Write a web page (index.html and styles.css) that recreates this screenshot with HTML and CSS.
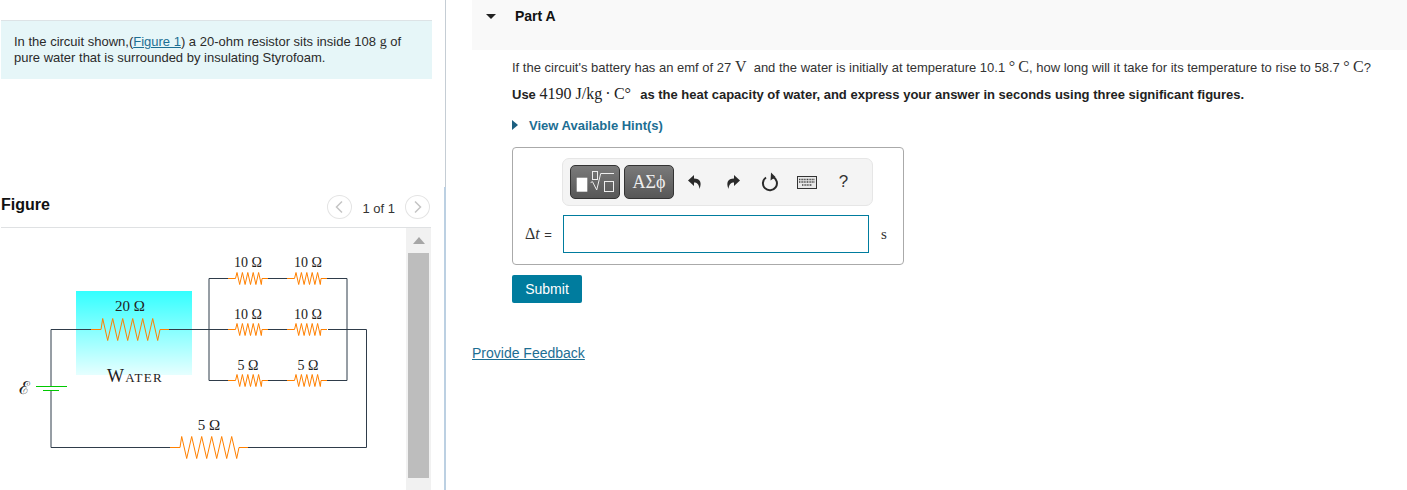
FILE: index.html
```html
<!DOCTYPE html>
<html lang="en">
<head>
  <meta charset="UTF-8" />
  <title>Part A</title>
  <link rel="stylesheet" href="styles.css">
</head>
<body>
  <div class="page">
    <!-- Left pane: problem statement and figure -->
    <div class="left-pane">
      <div class="intro">
        In the circuit shown,(<a href="#">Figure 1</a>) a 20-ohm resistor sits inside 108 <span class="math">g</span> of<br>
        pure water that is surrounded by insulating Styrofoam.
      </div>

      <div class="figure-head">
        <h2>Figure</h2>
        <div class="pager">
          <span class="pager-btn">
            <svg width="10" height="14" viewBox="0 0 10 14"><path d="M8 1.5 2.5 7 8 12.5" /></svg>
          </span>
          <span class="pager-text">1 of 1</span>
          <span class="pager-btn">
            <svg width="10" height="14" viewBox="0 0 10 14"><path d="M2 1.5 7.5 7 2 12.5" /></svg>
          </span>
        </div>
      </div>

      <div class="figure-body">
        <svg class="circuit" width="406" height="262" viewBox="0 228 406 262">
          <defs>
            <linearGradient id="water" x1="0" y1="0" x2="0" y2="1">
              <stop offset="0" stop-color="#33ffff" />
              <stop offset="1" stop-color="#e6ffff" />
            </linearGradient>
            <path id="r-big" d="M0 0H10L11.7-11 16.7 11 21.7-11 26.7 11 31.7-11 36.7 11 41.7-11 46.7 11 51.7-11 56.7 11 61.7-11 66.7 11 69 0H78" />
            <path id="r-small" d="M0 0H7.5L9-6 11.7 6 14.4-6 17.1 6 19.8-6 22.5 6 25.2-6 27.9 6 30.6-6 33.3 6 34 0H40" />
          </defs>

          <rect x="76" y="291" width="116" height="84" fill="url(#water)" />

          <g class="wire">
            <path d="M51 329.500V386M51 391V447.500H170M248 447.500H366.500V329.500H328" />
            <path d="M51 329.500H92M169 329.500H228M268 329.500H288" />
            <path d="M228 278.500H209V380.500H228M268 278.500H288M327 278.500H347V380.500H327M268 380.500H288" />
          </g>

          <g class="battery">
            <path d="M36 386.500H67M43 390.500H59" />
          </g>

          <g class="resistor">
            <use href="#r-big" x="91" y="329.500" />
            <use href="#r-big" x="170" y="447.500" />
            <use href="#r-small" x="228" y="278.500" />
            <use href="#r-small" x="287" y="278.500" />
            <use href="#r-small" x="228" y="329.500" />
            <use href="#r-small" x="287" y="329.500" />
            <use href="#r-small" x="228" y="380.500" />
            <use href="#r-small" x="287" y="380.500" />
          </g>

          <g class="labels">
            <text class="big-label" x="130" y="311">20 Ω</text>
            <text x="248" y="267">10 Ω</text>
            <text x="308" y="267">10 Ω</text>
            <text x="248" y="319">10 Ω</text>
            <text x="308" y="319">10 Ω</text>
            <text x="248" y="370">5 Ω</text>
            <text x="308" y="370">5 Ω</text>
            <text class="big-label" x="209" y="430">5 Ω</text>
            <text class="water-label" x="135" y="382">Water</text>
            <text class="emf" x="24" y="394">ℰ</text>
          </g>
        </svg>

        <div class="scrollbar">
          <span class="scroll-up"></span>
          <div class="scroll-thumb"></div>
        </div>
      </div>
    </div>

    <div class="divider">
      <div class="divider-top"></div>
      <div class="divider-grip"></div>
    </div>

    <!-- Right pane: the question -->
    <div class="right-pane">
      <div class="part-head">
        <span class="caret-down"></span>
        <h3>Part A</h3>
      </div>

      <div class="part-body">
        <p class="question">If the circuit's battery has an emf of 27 <span class="math big">V</span> &nbsp;and the water is initially at temperature 10.1 <span class="math big">°&thinsp;C</span>, how long will it take for its temperature to rise to 58.7 <span class="math big">°&thinsp;C</span>?</p>
        <p class="question strong">Use <span class="math big heat">4190 J/kg&thinsp;·&thinsp;C°</span> &nbsp;as the heat capacity of water, and express your answer in seconds using three significant figures.</p>
        <a class="hint" href="#"><span class="caret-right"></span>View Available Hint(s)</a>

        <div class="answer-box">
          <div class="toolbar">
            <button class="tool-btn templates">
              <svg width="46" height="30" viewBox="0 0 46 30">
                <rect class="fill" x="4.700" y="10.700" width="10.600" height="14" />
                <rect class="line" x="20.500" y="4.500" width="5" height="8" />
                <path class="line" d="M18.700 15.500 20.500 14.700 24.700 23 28.700 6.500H42" />
                <rect class="line" x="32.500" y="14.500" width="9" height="10" />
              </svg>
            </button>
            <button class="tool-btn symbols">ΑΣϕ</button>

            <span class="tool-icon undo">
              <svg width="16" height="18" viewBox="0 0 16 18"><path d="M7 2 1 7.500 7 13V9.500C10 9.500 12 11 12.500 16 15 10 13.500 5.500 7 5.500Z" /></svg>
            </span>
            <span class="tool-icon redo">
              <svg width="16" height="18" viewBox="0 0 16 18"><path d="M9 2 15 7.500 9 13V9.500C6 9.500 4 11 3.500 16 1 10 2.500 5.500 9 5.500Z" /></svg>
            </span>
            <span class="tool-icon reset">
              <svg width="18" height="20" viewBox="0 0 18 20">
                <path class="ring" d="M5 5.500A7 7 0 1 0 12 5" />
                <path d="M10 .5 14.500 5 9.500 8.500Z" />
              </svg>
            </span>
            <span class="tool-icon keyboard">
              <svg width="20" height="13" viewBox="0 0 20 13">
                <rect x=".5" y=".5" width="19" height="12" />
                <path class="keys" d="M2 3.500H18M2 6H18M5 9H15" />
              </svg>
            </span>
            <span class="tool-icon help">?</span>
          </div>

          <div class="answer-row">
            <label class="answer-label"><span class="math">Δ<i>t</i></span> =</label>
            <input class="answer-input" type="text" />
            <span class="answer-unit">s</span>
          </div>
        </div>

        <button class="submit">Submit</button>
      </div>

      <a class="feedback" href="#">Provide Feedback</a>
    </div>
  </div>
</body>
</html>
```

FILE: styles.css
```css
* {
  box-sizing: border-box;
}

html, body {
  margin: 0;
  padding: 0;
  height: 490px;
  overflow: hidden;
}

body {
  font-family: 'Liberation Sans', Arial, sans-serif;
  font-size: 13px;
  color: #333;
  background: #fff;
}

a {
  color: #1c6e93;
}

.page {
  display: flex;
  height: 490px;
}

.math {
  font-family: 'Liberation Serif', serif;
  font-size: 14px;
  line-height: 0;
}

/* left pane */
.left-pane {
  width: 444px;
  flex: none;
  padding: 20px 0 0 1px;
}

.intro {
  width: 431px;
  height: 59px;
  padding: 13px 13px 0;
  background: #e6f6f8;
  border-top: 1px solid #dde3e6;
  line-height: 16px;
  color: #2b2b2b;
}

.figure-head {
  display: flex;
  justify-content: space-between;
  align-items: center;
  width: 429px;
  height: 39px;
  margin-top: 109px;
  padding-bottom: 2px;
}

.figure-head h2 {
  margin: 0 0 4px;
  font-size: 16px;
  line-height: 30px;
  color: #111;
}

.pager {
  display: flex;
  align-items: center;
}

.pager-btn {
  display: flex;
  align-items: center;
  justify-content: center;
  width: 25px;
  height: 24px;
  border: 1px solid #e4e4e4;
  border-radius: 50%;
}

.pager-btn svg path {
  fill: none;
  stroke: #c4c4c4;
  stroke-width: 1.5;
}

.pager-text {
  margin: 4px 10px 0 10.500px;
  color: #333;
}

.figure-body {
  display: flex;
  width: 430px;
  height: 263px;
  border-top: 1px solid #dfe1e3;
}

.circuit {
  flex: none;
  display: block;
  margin-left: -1px;
}

.wire {
  fill: none;
  stroke: #2f3c4a;
  stroke-width: 1;
}

.battery {
  fill: none;
  stroke: #00c800;
  stroke-width: 1;
}

.resistor {
  fill: none;
  stroke: #ff8000;
  stroke-width: 1;
}

.labels text {
  font-family: 'Liberation Serif', serif;
  font-size: 14px;
  text-anchor: middle;
  fill: #222;
}

.labels .big-label {
  font-size: 15px;
}

.labels .water-label {
  font-size: 18px;
  font-variant: small-caps;
  letter-spacing: 1.300px;
}

.labels .emf {
  font-family: 'DejaVu Serif', serif;
  font-size: 18px;
}

.scrollbar {
  position: relative;
  flex: none;
  width: 25px;
  background: #f1f1f1;
  padding: 25px 2px 0;
}

.scroll-up {
  position: absolute;
  top: 9px;
  left: 7px;
  border-left: 6px solid transparent;
  border-right: 6px solid transparent;
  border-bottom: 7px solid #a6a6a6;
}

.scroll-thumb {
  height: 225px;
  background: #bdbdbd;
}

/* divider between panes */
.divider {
  display: flex;
  flex-direction: column;
  flex: none;
  width: 2px;
}

.divider-top {
  height: 187px;
  margin-left: 1px;
  background: #c5cdd4;
}

.divider-grip {
  flex: 1;
  background: #bcd0e2;
}

/* right pane */
.right-pane {
  flex: 1;
  margin-left: 26px;
}

.part-head {
  display: flex;
  height: 50px;
  padding: 9px 0 0 14px;
  background: #f9f9f9;
}

.part-head h3 {
  margin: 0 0 0 19px;
  font-size: 14px;
  line-height: 15px;
  color: #111;
}

.caret-down {
  width: 0;
  height: 0;
  margin-top: 5px;
  border-left: 5.500px solid transparent;
  border-right: 5.500px solid transparent;
  border-top: 5.500px solid #222;
}

.part-body {
  padding: 0 0 0 40px;
}

.question {
  margin: 0;
  height: 27px;
  line-height: 27px;
  white-space: nowrap;
  color: #333;
}

.question:first-child {
  margin-top: 4px;
}

.question.strong {
  font-weight: bold;
  color: #222;
}

.question .math {
  font-weight: normal;
}

.math.big {
  font-size: 16px;
}

.math.heat {
  margin-right: 2px;
}

.hint {
  display: flex;
  align-items: center;
  height: 16px;
  margin-top: 9px;
  font-weight: bold;
  text-decoration: none;
  color: #1c6e93;
}

.caret-right {
  width: 0;
  height: 0;
  margin-right: 11px;
  border-top: 5px solid transparent;
  border-bottom: 5px solid transparent;
  border-left: 6px solid #1c5f80;
}

.answer-box {
  width: 392px;
  height: 118px;
  margin-top: 14px;
  padding: 10px 0 0 49px;
  border: 1px solid #aaa;
  border-radius: 4px;
}

.toolbar {
  display: flex;
  align-items: center;
  width: 311px;
  height: 48px;
  padding-left: 7px;
  background: #f4f4f4;
  border: 1px solid #e6e6e6;
  border-radius: 7px;
}

.tool-btn {
  height: 34px;
  padding: 0;
  color: #eee;
  background: linear-gradient(to bottom, #7a7a7a, #575757);
  border: 1px solid #333;
  border-radius: 5px;
}

.templates {
  display: flex;
  align-items: center;
  justify-content: center;
  width: 50px;
  margin-right: 4px;
}

.templates .fill {
  fill: #fff;
}

.templates .line {
  fill: none;
  stroke: #eee;
  stroke-width: 1;
}

.symbols {
  width: 50px;
  margin-right: 2px;
  font-family: 'Liberation Serif', serif;
  font-size: 18px;
}

.tool-icon {
  display: flex;
  align-items: center;
  justify-content: center;
  flex: none;
  width: 37px;
  height: 20px;
  color: #333;
}

.undo, .redo {
  width: 38px;
}

.reset {
  width: 36px;
}

.tool-icon svg {
  fill: #2a2a2a;
}

.reset .ring {
  fill: none;
  stroke: #2a2a2a;
  stroke-width: 2;
}

.keyboard rect {
  fill: #e8e8e8;
  stroke: #333;
  stroke-width: 1;
}

.keyboard .keys {
  fill: none;
  stroke: #444;
  stroke-width: 1.500;
  stroke-dasharray: 1 .6;
}

.help {
  font-size: 17px;
}

.answer-row {
  display: flex;
  align-items: center;
  margin: 9px 0 0 -37px;
}

.answer-label {
  width: 38px;
  font-size: 13px;
  color: #333;
}

.answer-label .math {
  font-size: 16px;
  margin-right: 1px;
}

.answer-input {
  width: 306px;
  height: 38px;
  padding: 0 8px;
  background: #fff;
  border: 1px solid #007c9e;
  border-radius: 0;
  outline: none;
}

.answer-unit {
  margin-left: 12px;
  font-family: 'Liberation Serif', serif;
  font-size: 15px;
}

.submit {
  display: block;
  width: 70px;
  height: 28px;
  margin-top: 10px;
  padding: 0;
  font-family: 'Liberation Sans', Arial, sans-serif;
  font-size: 14px;
  color: #fff;
  background: #007c9e;
  border: none;
  border-radius: 2px;
}

.feedback {
  display: inline-block;
  margin-top: 42px;
  font-size: 14px;
  line-height: 16px;
}
```
